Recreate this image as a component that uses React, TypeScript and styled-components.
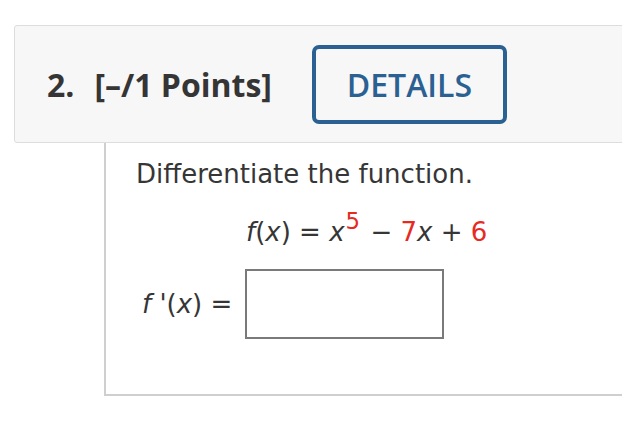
import React from "react";
import styled, { createGlobalStyle } from "styled-components";

const Global = createGlobalStyle`
  html, body {
    margin: 0;
    padding: 0;
    background: #ffffff;
    overflow: hidden;
  }
  body {
    width: 622px;
    height: 438px;
  }
`;

const Page = styled.div`
  padding: 25px 0 0 14px;
  width: 660px;
`;

const Header = styled.div`
  display: flex;
  align-items: center;
  box-sizing: border-box;
  height: 118px;
  padding: 0 0 0 32px;
  background: #f7f7f7;
  border: 1px solid #dddddd;
  border-radius: 3px;
  font-family: "Open Sans", "Liberation Sans", sans-serif;
  color: #353535;
`;

const Number = styled.span`
  font-size: 32px;
  font-weight: 700;
`;

const Points = styled.span`
  font-size: 32px;
  font-weight: 700;
  margin-left: 20px;
`;

const DetailsButton = styled.button`
  box-sizing: border-box;
  width: 195px;
  height: 79px;
  margin-left: 40px;
  border: 4px solid #2b6092;
  border-radius: 7px;
  background: transparent;
  color: #2b6092;
  font-family: "Open Sans", "Liberation Sans", sans-serif;
  font-size: 32px;
  font-weight: 600;
  padding: 0;
  cursor: pointer;
`;

const Panel = styled.div`
  margin-left: 90px;
  border-left: 2px solid #cfcfcf;
  border-bottom: 2px solid #cfcfcf;
  box-sizing: border-box;
  height: 253px;
  padding: 16px 0 0 30px;
  font-family: "DejaVu Sans", Verdana, sans-serif;
  font-size: 26px;
  line-height: 30.6px;
  color: #363636;
`;

const Prompt = styled.div``;

const Formula = styled.div`
  margin-top: 27px;
  padding-left: 110px;
  white-space: pre;
`;

const Var = styled.i`
  font-style: italic;
`;

const Red = styled.span`
  color: #e8291f;
`;

const Sup = styled.sup`
  font-size: 0.88em;
  line-height: 0;
  vertical-align: 0;
  position: relative;
  top: -0.5em;
  margin-left: 1px;
  margin-right: 2px;
  color: #e8291f;
`;

const AnswerRow = styled.div`
  display: flex;
  align-items: center;
  margin-top: 22px;
  padding-left: 6px;
`;

const Label = styled.span`
  white-space: pre;
  margin-right: 13px;
`;

const AnswerBox = styled.input`
  box-sizing: border-box;
  width: 199px;
  height: 70px;
  border: 2px solid #7a7a7a;
  border-radius: 0;
  background: #ffffff;
  outline: none;
  margin: 0;
  padding: 0 6px;
  font-family: inherit;
  font-size: 20px;
`;

export default function App() {
  return (
    <>
      <Global />
      <Page>
        <Header>
          <Number>2.</Number>
          <Points>[–/1 Points]</Points>
          <DetailsButton type="button">DETAILS</DetailsButton>
        </Header>
        <Panel>
          <Prompt>Differentiate the function.</Prompt>
          <Formula>
            <Var>f</Var>(<Var>x</Var>) = <Var>x</Var>
            <Sup>5</Sup> − <Red>7</Red>
            <Var>x</Var> + <Red>6</Red>
          </Formula>
          <AnswerRow>
            <Label>
              <Var>f</Var> '(<Var>x</Var>) =
            </Label>
            <AnswerBox type="text" aria-label="f prime of x" />
          </AnswerRow>
        </Panel>
      </Page>
    </>
  );
}
